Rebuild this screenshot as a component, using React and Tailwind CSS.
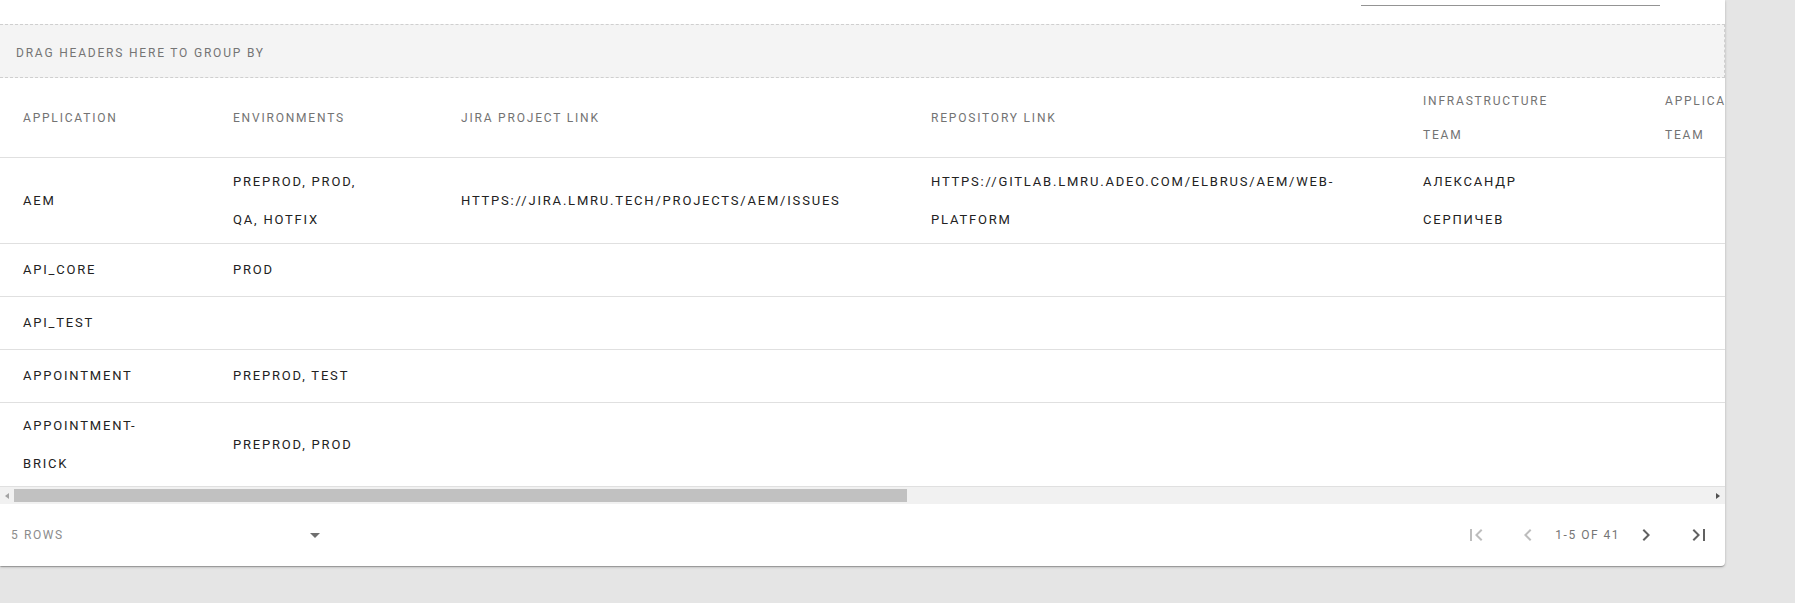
import { MdFirstPage, MdChevronLeft, MdChevronRight, MdLastPage, MdArrowDropDown } from 'react-icons/md';

const columns = [
  { key: 'app', label: ['Application'], width: 'w-[210px]' },
  { key: 'env', label: ['Environments'], width: 'w-[228px]' },
  { key: 'jira', label: ['Jira project link'], width: 'w-[470px]' },
  { key: 'repo', label: ['Repository link'], width: 'w-[492px]' },
  { key: 'infra', label: ['Infrastructure', 'team'], width: 'w-[242px]' },
  { key: 'appTeam', label: ['Application', 'team'], width: 'w-[300px]' },
];

const rows = [
  {
    id: 1,
    height: 'h-[86px]',
    app: ['AEM'],
    env: ['Preprod, Prod,', 'QA, Hotfix'],
    jira: ['https://jira.lmru.tech/projects/AEM/issues'],
    repo: ['https://gitlab.lmru.adeo.com/elbrus/aem/web-', 'platform'],
    infra: ['Александр', 'Серпичев'],
    appTeam: [],
  },
  { id: 2, height: 'h-[53px]', app: ['api_core'], env: ['Prod'], jira: [], repo: [], infra: [], appTeam: [] },
  { id: 3, height: 'h-[53px]', app: ['api_test'], env: [], jira: [], repo: [], infra: [], appTeam: [] },
  { id: 4, height: 'h-[53px]', app: ['appointment'], env: ['Preprod, Test'], jira: [], repo: [], infra: [], appTeam: [] },
  { id: 5, height: 'h-[84px]', app: ['appointment-', 'brick'], env: ['Preprod, Prod'], jira: [], repo: [], infra: [], appTeam: [] },
];

const Lines = ({ lines }) => (
  <div className="whitespace-nowrap">
    {lines.map((l, i) => (
      <div key={i}>{l}</div>
    ))}
  </div>
);

export default function App() {
  return (
    <div className="w-[1795px] h-[603px] bg-[#e5e5e5] overflow-hidden font-['Roboto',sans-serif]">
      <div className="w-[1725px] bg-white rounded-br-[4px] shadow-[0_1px_3px_rgba(0,0,0,0.2),0_1px_1px_rgba(0,0,0,0.14),0_2px_1px_-1px_rgba(0,0,0,0.12)]">
        {/* search field underline (cut off) */}
        <div className="h-[24px] flex justify-end pr-[65px] pt-[5px]">
          <div className="w-[299px] h-[1px] bg-[#949494]" />
        </div>

        {/* Group by panel */}
        <div className="h-[54px] bg-[#f4f4f4] border-y border-r border-dashed border-[#cfcfcf] flex items-center pl-[16px] pt-[3px] text-[12px] tracking-[1.8px] uppercase text-[#757575]">
          Drag headers here to group by
        </div>

        {/* Table */}
        <div className="overflow-hidden">
          <div className="flex h-[80px] border-b border-[#e0e0e0] items-center text-[12px] leading-[34px] tracking-[1.8px] uppercase text-[#737373]">
            {columns.map((c) => (
              <div key={c.key} className={`${c.width} shrink-0 pl-[23px]`}>
                <Lines lines={c.label} />
              </div>
            ))}
          </div>
          {rows.map((r) => (
            <div
              key={r.id}
              className={`flex ${r.height} border-b border-[#e0e0e0] items-center text-[13px] leading-[38px] tracking-[1.8px] uppercase text-[#222222]`}
            >
              {columns.map((c) => (
                <div key={c.key} className={`${c.width} shrink-0 pl-[23px]`}>
                  <Lines lines={r[c.key]} />
                </div>
              ))}
            </div>
          ))}
        </div>

        {/* Horizontal scrollbar */}
        <div className="h-[17px] bg-[#f1f1f1] flex items-center">
          <div className="w-[14px] flex justify-center">
            <div className="w-0 h-0 border-y-[3px] border-y-transparent border-r-[4px] border-r-[#a3a3a3]" />
          </div>
          <div className="w-[893px] h-[13px] bg-[#c1c1c1]" />
          <div className="flex-1" />
          <div className="w-[14px] flex justify-center">
            <div className="w-0 h-0 border-y-[3px] border-y-transparent border-l-[4px] border-l-[#505050]" />
          </div>
        </div>

        {/* Footer */}
        <div className="h-[62px] flex items-center justify-between">
          <div className="pl-[11px] w-[327px] flex items-center justify-between">
            <span className="text-[12px] tracking-[1.6px] uppercase text-[#8c8c8c]">5 rows</span>
            <MdArrowDropDown className="w-[24px] h-[24px] text-[#6f6f6f]" />
          </div>
          <div className="flex items-center pr-[2px]">
            <button className="w-[48px] h-[48px] flex items-center justify-center text-[#bdbdbd]">
              <MdFirstPage className="w-[24px] h-[24px]" />
            </button>
            <button className="ml-[4px] w-[48px] h-[48px] flex items-center justify-center text-[#bdbdbd]">
              <MdChevronLeft className="w-[24px] h-[24px]" />
            </button>
            <span className="ml-[3px] text-[12px] tracking-[1.5px] uppercase text-[#757575]">1-5 of 41</span>
            <button className="ml-[2px] w-[48px] h-[48px] flex items-center justify-center text-[#616161]">
              <MdChevronRight className="w-[24px] h-[24px]" />
            </button>
            <button className="ml-[5px] w-[48px] h-[48px] flex items-center justify-center text-[#616161]">
              <MdLastPage className="w-[24px] h-[24px]" />
            </button>
          </div>
        </div>
      </div>
    </div>
  );
}
